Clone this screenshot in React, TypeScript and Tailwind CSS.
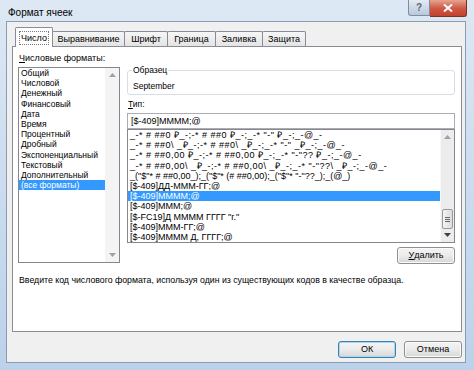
import React from "react";

const FONT = { fontFamily: '"Liberation Sans", Arial, sans-serif' };

const leftItems = [
  "Общий",
  "Числовой",
  "Денежный",
  "Финансовый",
  "Дата",
  "Время",
  "Процентный",
  "Дробный",
  "Экспоненциальный",
  "Текстовый",
  "Дополнительный",
  "(все форматы)",
];

const rightItems = [
  '_-* # ##0 ₽_-;-* # ##0 ₽_-;_-* "-" ₽_-;_-@_-',
  '_-* # ##0\\ _₽_-;-* # ##0\\ _₽_-;_-* "-" _₽_-;_-@_-',
  '_-* # ##0,00 ₽_-;-* # ##0,00 ₽_-;_-* "-"?? ₽_-;_-@_-',
  '_-* # ##0,00\\ _₽_-;-* # ##0,00\\ _₽_-;_-* "-"??\\ _₽_-;_-@_-',
  '_("$"* # ##0,00_);_("$"* (# ##0,00);_("$"* "-"??_);_(@_)',
  "[$-409]ДД-МММ-ГГ;@",
  "[$-409]ММММ;@",
  "[$-409]МММ;@",
  '[$-FC19]Д ММММ ГГГГ "г."',
  "[$-409]МММ-ГГ;@",
  "[$-409]ММММ Д, ГГГГ;@",
];

function Arrow({ up, dark }: { up?: boolean; dark?: boolean }) {
  return (
    <svg width="7" height="4" viewBox="0 0 7 4">
      <path
        d={up ? "M0 4 L3.5 0 L7 4 Z" : "M0 0 L3.5 4 L7 0 Z"}
        fill={dark ? "#404040" : "#a0a0a0"}
      />
    </svg>
  );
}

function Tab({ label, w, selected }: { label: string; w: string; selected?: boolean }) {
  if (selected) {
    return (
      <div
        className={`${w} h-[20px] -mb-px relative z-10 bg-white border border-b-0 border-[#898c95] rounded-t-[2px] flex items-center justify-center px-[3px] pt-[1px]`}
      >
        <div className="h-[14px] w-full border border-dotted border-[#7a7a7a] flex items-center justify-center text-[9px] leading-[11px] text-black">
          {label}
        </div>
      </div>
    );
  }
  return (
    <div
      className={`${w} h-[15px] -ml-px border border-b-0 border-[#898c95] rounded-t-[2px] bg-gradient-to-b from-[#f6f6f6] to-[#e4e4e4] flex items-center justify-center text-[9px] leading-[11px] text-black`}
    >
      {label}
    </div>
  );
}

function Button({ children, w, def }: { children: React.ReactNode; w: string; def?: boolean }) {
  return (
    <div
      className={`${w} h-[17px] rounded-[3px] border ${
        def ? "border-[#3c7fb1]" : "border-[#8f8f8f]"
      } bg-gradient-to-b from-[#f4f4f4] via-[#ebebeb] to-[#d6d6d6] flex items-center justify-center text-[9px] leading-[11px] text-black ${
        def ? "shadow-[inset_0_0_0_1px_#a8d8f0]" : "shadow-[inset_0_0_0_1px_#fbfbfb]"
      }`}
    >
      {children}
    </div>
  );
}

export default function App() {
  return (
    <div
      className="w-[474px] h-[370px] bg-gradient-to-b from-[#dde8f4] via-[#cbdcee] to-[#bcd2ea] flex flex-col overflow-hidden"
      style={FONT}
    >
      {/* Title bar */}
      <div className="h-[21px] flex items-start justify-between pl-[8px] pr-[7px] shrink-0">
        <div className="pt-[7px] text-[10px] leading-[12px] text-black">Формат ячеек</div>
        <div className="flex">
          <div className="w-[22px] h-[16px] rounded-bl-[3px] border border-t-0 border-[#7d8ea3] bg-gradient-to-b from-[#e4ebf3] to-[#b9c8da] flex items-center justify-center text-[10px] leading-[10px] text-[#58687c] font-bold">
            ?
          </div>
          <div className="w-[37px] h-[17px] rounded-br-[3px] border border-t-0 border-l-0 border-[#7a3227] bg-gradient-to-b from-[#e7a393] via-[#cf5a44] to-[#c2402b] flex items-center justify-center">
            <svg width="10" height="8" viewBox="0 0 10 8">
              <path d="M1 0.5 L9 7.5 M9 0.5 L1 7.5" stroke="#ffffff" strokeWidth="2" />
            </svg>
          </div>
        </div>
      </div>

      {/* Client area */}
      <div className="ml-[6px] mr-[8px] h-[342px] bg-[#f0f0f0] border border-[#8a9cb2] shrink-0 flex flex-col">
        {/* Tabs */}
        <div className="mt-[5px] ml-[8px] h-[19px] flex items-end">
          <Tab label="Число" w="w-[38px]" selected />
          <Tab label="Выравнивание" w="w-[73px]" />
          <Tab label="Шрифт" w="w-[44px]" />
          <Tab label="Граница" w="w-[49px]" />
          <Tab label="Заливка" w="w-[48px]" />
          <Tab label="Защита" w="w-[44px]" />
        </div>

        {/* Panel */}
        <div className="ml-[5px] w-[450px] h-[286px] bg-white border border-[#898c95] flex flex-col pl-[5px] text-[8.5px] leading-[11px] text-black">
          <div className="mt-[5px] ml-px h-[12px] text-[9px] leading-[12px]">
            <span className="underline">Ч</span>исловые форматы:
          </div>
          <div className="mt-[3px] flex gap-[7px]">
            {/* Left list */}
            <div className="w-[102px] h-[196px] border border-[#828790] flex">
              <div className="flex-1 flex flex-col">
                {leftItems.map((t, i) => (
                  <div
                    key={t}
                    className={`h-[10.2px] flex items-center pl-[2px] leading-[10px] ${
                      i === leftItems.length - 1 ? "bg-[#3399ff] text-white" : ""
                    }`}
                  >
                    {t}
                  </div>
                ))}
              </div>
              <div className="w-[14px] bg-[#f4f4f4] flex flex-col justify-between items-center py-[5px]">
                <Arrow up />
                <Arrow />
              </div>
            </div>

            {/* Right column */}
            <div className="w-[328px] flex flex-col">
              <div className="mt-[3px] h-[25px] relative border border-[#d5dfe5] rounded-[3px] pt-[10px] pl-[5px]">
                <div className="absolute left-[4px] -top-[6px] bg-white px-px leading-[11px]">Образец</div>
                <div className="leading-[11px]">September</div>
              </div>
              <div className="mt-[3px] h-[12px] ml-px leading-[12px]">
                <span className="underline">Т</span>ип:
              </div>
              <div className="mt-[3px] h-[16px] border border-[#abadb3] flex items-center pl-[3px] text-[9px]">
                [$-409]ММММ;@
              </div>
              <div className="h-[114px] border border-[#828790] flex">
                <div className="flex-1 flex flex-col overflow-hidden text-[9px]">
                  {rightItems.map((t, i) => (
                    <div
                      key={t}
                      className={`h-[10.2px] flex items-center pl-[2px] leading-[10px] whitespace-pre ${
                        i < 4 ? "tracking-[0.5px]" : ""
                      } ${i === 6 ? "bg-[#3399ff] text-white" : ""}`}
                    >
                      {t}
                    </div>
                  ))}
                </div>
                <div className="w-[14px] bg-[#ececec] flex flex-col items-center py-[5px] border-l border-[#f8f8f8]">
                  <Arrow up />
                  <div className="flex-1" />
                  <div className="w-[11px] h-[20px] rounded-[2px] border border-[#9a9a9a] bg-gradient-to-r from-[#f4f4f4] to-[#dcdcdc] flex flex-col items-center justify-center gap-[1px] mb-[4px]">
                    <div className="w-[5px] h-px bg-[#666]" />
                    <div className="w-[5px] h-px bg-[#666]" />
                    <div className="w-[5px] h-px bg-[#666]" />
                  </div>
                  <Arrow dark />
                </div>
              </div>
              <div className="mt-[4px] self-end">
                <Button w="w-[58px]">
                  <span className="underline">У</span>далить
                </Button>
              </div>
            </div>
          </div>
          <div className="mt-[10px] ml-px text-[8.75px] leading-[12px]">
            Введите код числового формата, используя один из существующих кодов в качестве образца.
          </div>
        </div>

        {/* Bottom buttons */}
        <div className="mt-[9px] ml-[5px] w-[450px] flex justify-end gap-[8px]">
          <Button w="w-[58px]" def>
            ОК
          </Button>
          <Button w="w-[58px]">Отмена</Button>
        </div>
      </div>
    </div>
  );
}
